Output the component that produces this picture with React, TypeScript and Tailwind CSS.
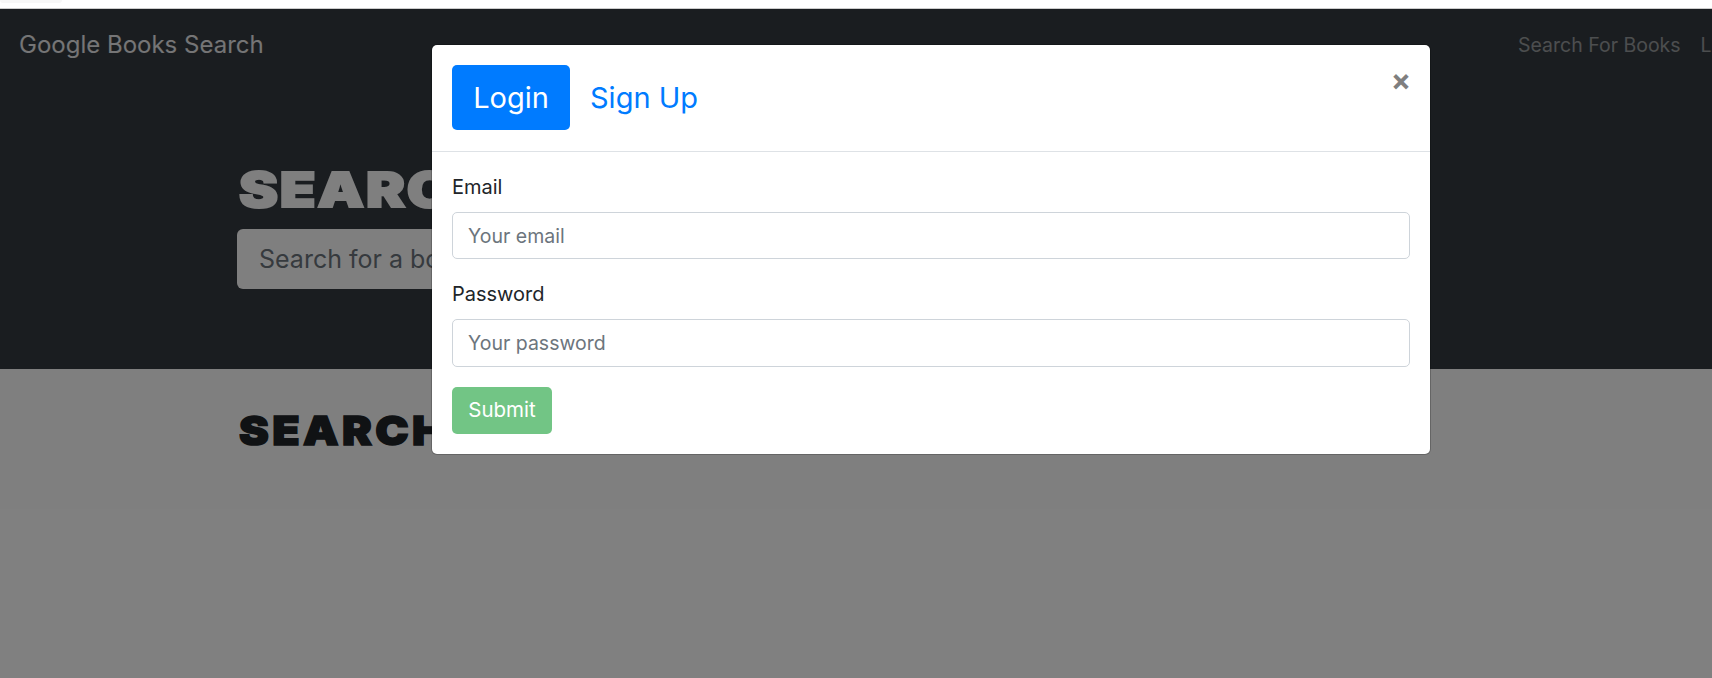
import React from 'react';

const bodyFont = "font-['Inter','Liberation_Sans',sans-serif]";

const Navbar: React.FC = () => (
  <nav className="flex h-[109px] items-start justify-between bg-[#343a40] pl-[19px] pt-[18px]">
    <a className="text-[24px] leading-[36px] text-white/90">Google Books Search</a>
    <div className="flex w-[194px] shrink-0 gap-[20px] whitespace-nowrap pt-[3px] text-[19.5px] leading-[30px] text-white/50">
      <a>Search For Books</a>
      <a>Login/Sign Up</a>
    </div>
  </nav>
);

const Field: React.FC<{ label: string; placeholder: string; type: string; inputHeight: string }> = ({
  label,
  placeholder,
  type,
  inputHeight,
}) => (
  <div className="mb-[20px]">
    <label className="mb-[10px] block text-[20px] leading-[30px] text-[#212529]">{label}</label>
    <input
      type={type}
      placeholder={placeholder}
      className={`block w-full rounded-[5px] border border-[#ced4da] bg-white px-[15px] text-[19.5px] text-[#495057] placeholder:text-[#6c757d] ${inputHeight}`}
    />
  </div>
);

const LoginModal: React.FC = () => (
  <div className="absolute left-[432px] top-[45px] z-20 h-[409px] w-[998px] rounded-[5px] bg-white shadow-[0_0_0_1px_rgba(0,0,0,0.2)]">
    <div className="flex h-[107px] items-start justify-between border-b border-[#dee2e6] pl-[20px] pr-[19px] pt-[20px]">
      <div className="flex items-center gap-[20px]">
        <button className="h-[65px] w-[118px] rounded-[5px] bg-[#007bff] text-[29px] text-white">Login</button>
        <a className="text-[29px] text-[#007bff]">Sign Up</a>
      </div>
      <button className="text-[30px] font-bold leading-[30px] text-black/50">×</button>
    </div>
    <div className="px-[20px] pt-[20px]">
      <Field label="Email" placeholder="Your email" type="email" inputHeight="h-[47px]" />
      <Field label="Password" placeholder="Your password" type="password" inputHeight="h-[48px]" />
      <button className="h-[47px] w-[100px] rounded-[5px] bg-[#28a745] text-[20.5px] text-white opacity-65">Submit</button>
    </div>
  </div>
);

const App: React.FC = () => {
  return (
    <div className={`relative h-[678px] w-[1712px] overflow-hidden bg-white ${bodyFont}`}>
      {/* strip above the navbar */}
      <div className="h-[9px] border-b border-[#cccccc] bg-white">
        <div className="h-[3px] w-[62px] rounded-b-full bg-[#f7f7f7]" />
      </div>

      <Navbar />

      {/* Search section */}
      <div className="h-[251px] bg-[#343a40] pl-[237px] pt-[43px] text-white">
        <h1 className="ml-[2px] origin-left scale-x-[1.22] whitespace-nowrap text-[48px] font-black leading-[58px] tracking-[1.5px] [-webkit-text-stroke:2px_currentColor]">
          SEARCH FOR BOOKS!
        </h1>
        <input
          placeholder="Search for a book"
          className="mt-[10px] block h-[60px] w-[800px] rounded-[6px] bg-white px-[22px] text-[25px] text-[#495057] placeholder:text-[#6c757d]"
        />
      </div>

      {/* Results */}
      <div className="pl-[237px] pt-[38px]">
        <h2 className="ml-[2px] origin-left scale-x-[1.12] whitespace-nowrap text-[40px] font-black leading-[48px] tracking-[3px] text-[#212529] [-webkit-text-stroke:1.5px_currentColor]">
          SEARCH FOR A BOOK TO BEGIN
        </h2>
      </div>

      {/* backdrop */}
      <div className="absolute inset-x-0 bottom-0 top-[9px] z-10 bg-black/50" />

      <LoginModal />
    </div>
  );
};

export default App;
